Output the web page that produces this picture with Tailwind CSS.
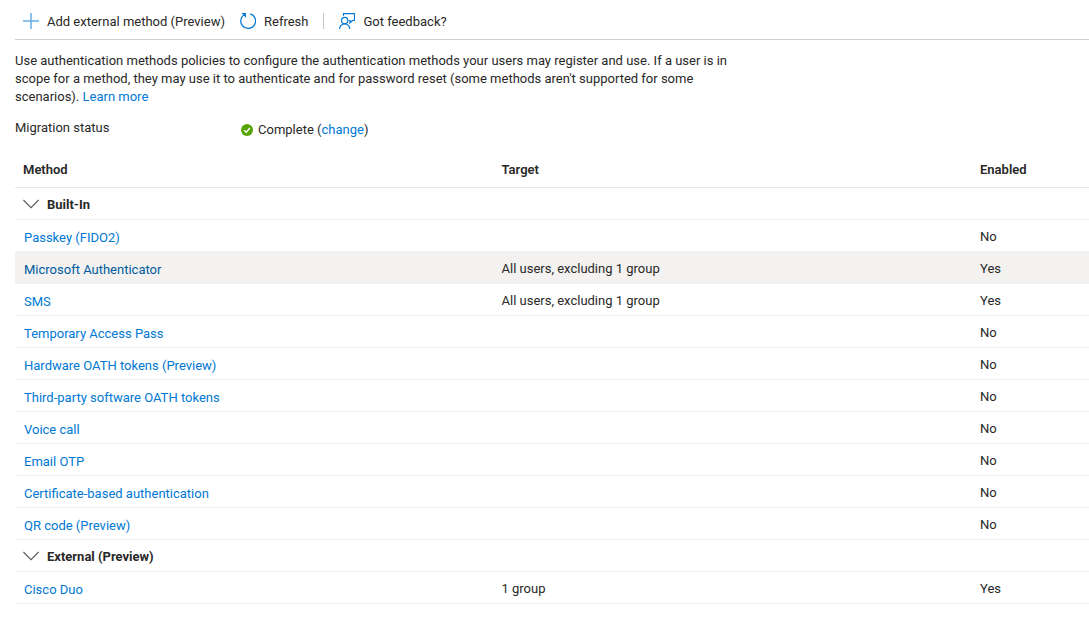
<!DOCTYPE html>
<html lang="en">

<head>
    <meta charset="UTF-8" />
    <meta name="viewport" content="width=device-width, initial-scale=1.0" />
    <script src="https://cdn.jsdelivr.net/npm/@tailwindcss/browser@4"></script>
    <title>Authentication methods</title>
</head>

<body class="bg-white text-[#292827] font-['Segoe_UI','Roboto',sans-serif] text-[13px] leading-[18px]">

    <main class="pl-[15px] overflow-hidden [&_button_span]:pt-0.5">
        <div class="flex items-center h-10 pt-[3px] pl-2 gap-[15px] border-b border-[#d2d0ce]">
            <button type="button" class="flex items-center gap-2">
                <svg class="size-4" viewBox="0 0 16 16" fill="none" stroke="#0078d4" stroke-opacity=".6" stroke-width="1.5">
                    <path d="M8 0v16M0 8h16" />
                </svg>
                <span>Add external method (Preview)</span>
            </button>
            <button type="button" class="flex items-center gap-2">
                <svg class="size-4" viewBox="0 0 16 16" fill="none" stroke="#0078d4" stroke-width="1.2">
                    <path d="M10.3 .9A7.4 7.4 0 1 1 5.2 1.2M1.9 .6H5.4V4.2" />
                </svg>
                <span>Refresh</span>
            </button>
            <div class="w-px h-4 bg-[#c8c6c4]"></div>
            <button type="button" class="flex items-center gap-2">
                <svg class="size-4" viewBox="0 0 16 16" fill="none" stroke="#0078d4" stroke-width="1.2">
                    <circle cx="5.7" cy="7.5" r="3.2" />
                    <path d="M.6 16A5.1 5.1 0 0 1 10.8 16M4.5 2.8V.6H15.5V7.5H13.5L11 9.8V7.5H10" />
                </svg>
                <span>Got feedback?</span>
            </button>
        </div>

        <p class="mt-3 max-w-[715px]">
            Use authentication methods policies to configure the authentication methods your users may register and use.
            If a user is in scope for a method, they may use it to authenticate and for password reset (some methods
            aren't supported for some scenarios). <a href="#" class="text-[#0078d4]">Learn more</a>
        </p>

        <div class="flex mt-[13px]">
            <div class="w-[226px]">Migration status</div>
            <div class="flex items-center pt-0.5 gap-[5px]">
                <svg class="size-3" viewBox="0 0 12 12" fill="none">
                    <circle cx="6" cy="6" r="6" fill="#57a300" />
                    <path d="M3 6.2L5.2 8.3L9 4" stroke="#fff" stroke-width="1.4" />
                </svg>
                <span>Complete (<a href="#" class="text-[#0078d4]">change</a>)</span>
            </div>
        </div>

        <table class="w-full mt-[13px] table-fixed border-separate border-spacing-0 text-left [&_td]:h-8 [&_td]:px-2 [&_td]:pt-0.5 [&_td]:border-b [&_td]:border-[#f3f2f1] [&_td_a]:block [&_td_a]:pl-px [&_td_a]:pt-0.5 [&_td_a]:text-[#0078d4]">
            <thead>
                <tr class="[&_th]:h-9 [&_th]:px-2 [&_th]:font-semibold [&_th]:border-b [&_th]:border-[#e8e8e8]">
                    <th>Method</th>
                    <th>Target</th>
                    <th class="w-[117px]">Enabled</th>
                </tr>
            </thead>
            <tbody>
                <tr>
                    <td colspan="3" class="pt-0!">
                        <button type="button" class="flex items-center gap-2 font-bold">
                            <svg class="size-4" viewBox="0 0 16 16" fill="none" stroke="#605e5c" stroke-width="1.2">
                                <path d="M.4 4L8 11.6L15.6 4" />
                            </svg>
                            <span>Built-In</span>
                        </button>
                    </td>
                </tr>
                <tr>
                    <td><a href="#">Passkey (FIDO2)</a></td>
                    <td></td>
                    <td>No</td>
                </tr>
                <tr class="bg-[#f3f2f1]">
                    <td><a href="#" class="text-[#005a9e]!">Microsoft Authenticator</a></td>
                    <td>All users, excluding 1 group</td>
                    <td>Yes</td>
                </tr>
                <tr>
                    <td><a href="#">SMS</a></td>
                    <td>All users, excluding 1 group</td>
                    <td>Yes</td>
                </tr>
                <tr>
                    <td><a href="#">Temporary Access Pass</a></td>
                    <td></td>
                    <td>No</td>
                </tr>
                <tr>
                    <td><a href="#">Hardware OATH tokens (Preview)</a></td>
                    <td></td>
                    <td>No</td>
                </tr>
                <tr>
                    <td><a href="#">Third-party software OATH tokens</a></td>
                    <td></td>
                    <td>No</td>
                </tr>
                <tr>
                    <td><a href="#">Voice call</a></td>
                    <td></td>
                    <td>No</td>
                </tr>
                <tr>
                    <td><a href="#">Email OTP</a></td>
                    <td></td>
                    <td>No</td>
                </tr>
                <tr>
                    <td><a href="#">Certificate-based authentication</a></td>
                    <td></td>
                    <td>No</td>
                </tr>
                <tr>
                    <td><a href="#">QR code (Preview)</a></td>
                    <td></td>
                    <td>No</td>
                </tr>
                <tr>
                    <td colspan="3" class="pt-0!">
                        <button type="button" class="flex items-center gap-2 font-bold">
                            <svg class="size-4" viewBox="0 0 16 16" fill="none" stroke="#605e5c" stroke-width="1.2">
                                <path d="M.4 4L8 11.6L15.6 4" />
                            </svg>
                            <span>External (Preview)</span>
                        </button>
                    </td>
                </tr>
                <tr>
                    <td><a href="#">Cisco Duo</a></td>
                    <td>1 group</td>
                    <td>Yes</td>
                </tr>
            </tbody>
        </table>
    </main>

</body>

</html>
